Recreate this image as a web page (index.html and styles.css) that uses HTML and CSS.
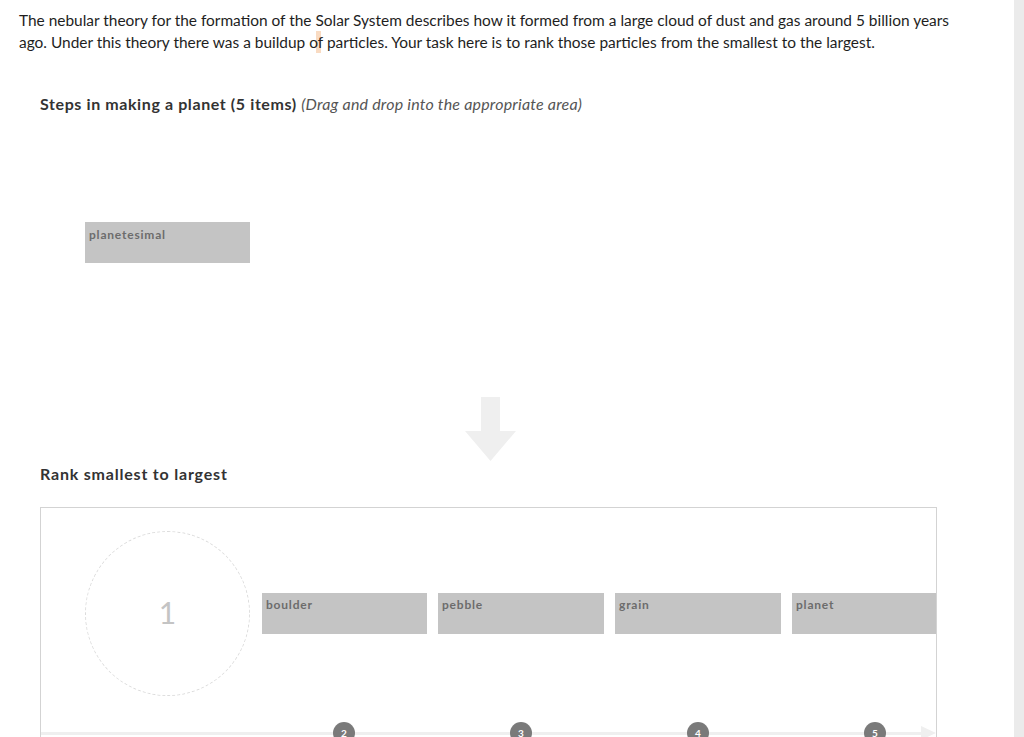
FILE: index.html
```html
<!DOCTYPE html>
<html lang="en">
<head>
<meta charset="utf-8">
<title>Steps in making a planet</title>
<link rel="stylesheet" href="styles.css">
</head>
<body>
<div class="page">
  <main class="content">
    <p class="intro">The nebular theory for the formation of the Solar System describes how it formed from a large cloud of dust and gas around 5 billion years ago. Under this theory there was a buildup <span class="mark">of</span> particles. Your task here is to rank those particles from the smallest to the largest.</p>

    <section class="question">
      <h2 class="prompt">Steps in making a planet (5 items) <em class="hint">(Drag and drop into the appropriate area)</em></h2>

      <div class="bank">
        <div class="card">planetesimal</div>
      </div>

      <div class="arrow-wrap">
        <svg class="arrow" width="51" height="64" viewBox="0 0 51 64" aria-hidden="true">
          <path d="M16 0 H35 V34 H51 L25.5 64 L0 34 H16 Z" fill="#efefef"/>
        </svg>
      </div>

      <h3 class="rank-title">Rank smallest to largest</h3>

      <div class="rank-box">
        <div class="grid">
          <div class="slot-circle"><span class="slot-num">1</span></div>
          <div class="card">boulder</div>
          <div class="card">pebble</div>
          <div class="card">grain</div>
          <div class="card">planet</div>
        </div>
        <div class="timeline">
          <div class="grid steps">
            <span class="step-empty"></span>
            <span class="badge">2</span>
            <span class="badge">3</span>
            <span class="badge">4</span>
            <span class="badge">5</span>
          </div>
        </div>
      </div>
    </section>
  </main>
  <aside class="rail"></aside>
</div>
</body>
</html>
```

FILE: styles.css
```css
* { box-sizing: border-box; }

html, body {
  margin: 0;
  padding: 0;
  background: #ffffff;
}

body {
  font-family: Lato, "Liberation Sans", sans-serif;
  color: #222222;
}

.page {
  display: flex;
  min-height: 100vh;
}

.content {
  flex: 1;
  min-width: 0;
  padding-bottom: 40px;
}

.rail {
  width: 10px;
  flex: 0 0 10px;
  background: #ebebeb;
}

.intro {
  margin: 9px 0 0 19px;
  width: 950px;
  font-size: 15.45px;
  line-height: 22px;
  color: #1e1e1e;
}

.mark {
  padding: 2px 0;
  background: linear-gradient(to right, transparent 52%, #f9dbc2 52%, #f9dbc2 88%, transparent 88%);
}

.question {
  margin-left: 40px;
  width: 897px;
}

.prompt {
  margin: 41px 0 0;
  font-size: 16px;
  line-height: 20px;
  font-weight: 700;
  color: #333333;
  letter-spacing: 0.6px;
}

.hint {
  font-weight: 400;
  font-style: italic;
  color: #555555;
  letter-spacing: 0.2px;
}

.bank {
  padding: 108px 0 0 45px;
  display: flex;
}

.card {
  width: 166px;
  height: 41px;
  background: #c4c4c4;
  color: #6c6c6c;
  font-size: 12px;
  font-weight: 700;
  letter-spacing: 0.8px;
  line-height: 14px;
  padding: 5px 4px 0;
}

.bank .card {
  width: 165px;
  padding-top: 6px;
}

.arrow-wrap {
  margin-top: 134px;
  display: flex;
  justify-content: center;
  padding-left: 3px;
}

.arrow {
  display: block;
}

.rank-title {
  margin: 3px 0 0;
  font-size: 16px;
  line-height: 20px;
  font-weight: 700;
  color: #333333;
  letter-spacing: 0.8px;
}

.rank-box {
  margin-top: 23px;
  border: 1px solid #d3d3d3;
  border-bottom: none;
  height: 300px;
  overflow: hidden;
  padding: 23px 0 0 44px;
}

.grid {
  display: grid;
  grid-template-columns: 165px 166px 166px 166px 166px;
  column-gap: 11px;
  align-items: center;
}

.grid > .card {
  width: auto;
}

.grid > .card:nth-child(2) {
  margin-left: 1px;
}

.slot-circle {
  width: 165px;
  height: 165px;
  border: 1px dashed #dcdcdc;
  border-radius: 50%;
  display: flex;
  align-items: center;
  justify-content: center;
}

.slot-num {
  font-size: 30px;
  color: #c4c4c4;
  font-weight: 400;
  margin-top: -4px;
}

.timeline {
  margin: 26px 0 0 -44px;
  padding-left: 44px;
  position: relative;
  background: linear-gradient(#efefef, #efefef) no-repeat 0 10px / 880px 3px;
}

.timeline::after {
  content: "";
  position: absolute;
  left: 880px;
  top: 4px;
  border-left: 15px solid #efefef;
  border-top: 7px solid transparent;
  border-bottom: 7px solid transparent;
}

.steps {
  justify-items: center;
}

.step-empty {
  height: 22px;
}

.badge {
  width: 22px;
  height: 22px;
  border-radius: 50%;
  background: #7a7a7a;
  color: #ffffff;
  font-size: 10px;
  font-weight: 700;
  display: flex;
  align-items: center;
  justify-content: center;
}
```
